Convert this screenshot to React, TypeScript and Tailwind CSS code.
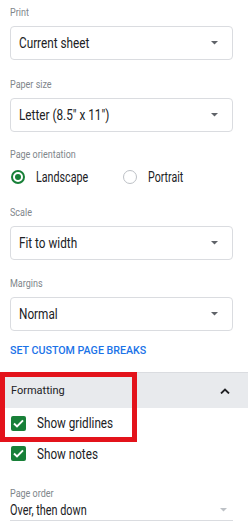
import React from "react";

const Caret = ({ color = "#5f6368" }: { color?: string }) => (
  <svg width="7" height="4" viewBox="0 0 7 4" className="shrink-0">
    <path d="M0 0 L7 0 L3.5 3.5 Z" fill={color} />
  </svg>
);

const Label = ({ children, className = "" }: { children: React.ReactNode; className?: string }) => (
  <div className={`text-[10px] leading-[12px] text-[#80868b] ${className}`}>
    <span className="inline-block origin-left scale-x-[0.9] whitespace-nowrap">{children}</span>
  </div>
);

const Select = ({ value, className = "" }: { value: string; className?: string }) => (
  <div
    className={`h-[34px] mr-[15px] border border-[#dadce0] rounded-[4px] flex items-center justify-between pl-[8px] pr-[14px] ${className}`}
  >
    <span className="inline-block origin-left scale-x-[0.84] whitespace-nowrap text-[14px] leading-[18px] text-[#202124]">
      {value}
    </span>
    <Caret />
  </div>
);

const Check = () => (
  <div className="w-[15px] h-[15px] rounded-[2px] bg-[#188038] flex items-center justify-center shrink-0">
    <svg width="11" height="9" viewBox="0 0 11 9">
      <path d="M1 4.6 L4 7.4 L10 1.4" stroke="#fff" strokeWidth="2" fill="none" />
    </svg>
  </div>
);

export default function App() {
  return (
    <div
      className="relative w-[248px] h-[524px] bg-white overflow-hidden"
      style={{ fontFamily: "Roboto, 'Noto Sans', Arial, sans-serif" }}
    >
      <div className="pl-[10px]">
        <Label className="pt-[7px]">Print</Label>
        <Select value="Current sheet" className="mt-[7px]" />
        <Label className="mt-[19px]">Paper size</Label>
        <Select value={'Letter (8.5" x 11")'} className="mt-[7px]" />
        <Label className="mt-[17px]">Page orientation</Label>
        <div className="mt-[6px] h-[20px] flex items-center pl-[1px]">
          <div className="w-[112px] flex items-center">
            <div className="w-[14px] h-[14px] rounded-full border-2 border-[#188038] flex items-center justify-center shrink-0">
              <div className="w-[6px] h-[6px] rounded-full bg-[#188038]" />
            </div>
            <span className="ml-[11px] inline-block origin-left scale-x-[0.765] whitespace-nowrap text-[14px] leading-[18px] text-[#202124]">
              Landscape
            </span>
          </div>
          <div className="flex items-center">
            <div className="w-[14px] h-[14px] rounded-full border border-[#bdc1c6] shrink-0" />
            <span className="ml-[11px] inline-block origin-left scale-x-[0.76] whitespace-nowrap text-[14px] leading-[18px] text-[#202124]">
              Portrait
            </span>
          </div>
        </div>
        <Label className="mt-[20px]">Scale</Label>
        <Select value="Fit to width" className="mt-[7px]" />
        <Label className="mt-[18px]">Margins</Label>
        <Select value="Normal" className="mt-[7px]" />
        <div className="mt-[13px] text-[11px] leading-[14px] font-medium text-[#1a73e8]">
          <span className="inline-block origin-left scale-x-[0.97] whitespace-nowrap">SET CUSTOM PAGE BREAKS</span>
        </div>
      </div>
      <div className="mt-[14px] h-[36px] bg-[#e8eaed] border-t border-[#dadce0] flex items-center justify-between pl-[11px] pr-[18px]">
        <span className="text-[11px] leading-[16px] text-[#202124]">Formatting</span>
        <svg width="10" height="6" viewBox="0 0 10 6">
          <path d="M1 5.5 L5 1.5 L9 5.5" stroke="#202124" strokeWidth="1.8" fill="none" />
        </svg>
      </div>
      <div className="pl-[11px]">
        <div className="h-[30px] flex items-center">
          <Check />
          <span className="ml-[11px] inline-block origin-left scale-x-[0.835] whitespace-nowrap text-[14px] leading-[18px] text-[#202124]">
            Show gridlines
          </span>
        </div>
        <div className="h-[31px] flex items-center">
          <Check />
          <span className="ml-[11px] inline-block origin-left scale-x-[0.835] whitespace-nowrap text-[14px] leading-[18px] text-[#202124]">
            Show notes
          </span>
        </div>
      </div>
      <div className="pl-[10px] mr-[15px]">
        <Label className="mt-[19px]">Page order</Label>
        <div className="h-[21px] flex items-center justify-between border-b border-[#dadce0] pr-[6px]">
          <span className="inline-block origin-left scale-x-[0.775] whitespace-nowrap text-[14px] leading-[18px] text-[#202124]">
            Over, then down
          </span>
          <Caret color="#bdc1c6" />
        </div>
      </div>
      <div className="absolute left-0 top-[372px] w-[137px] h-[70px] border-[5px] border-[#e3131b] pointer-events-none" />
    </div>
  );
}
